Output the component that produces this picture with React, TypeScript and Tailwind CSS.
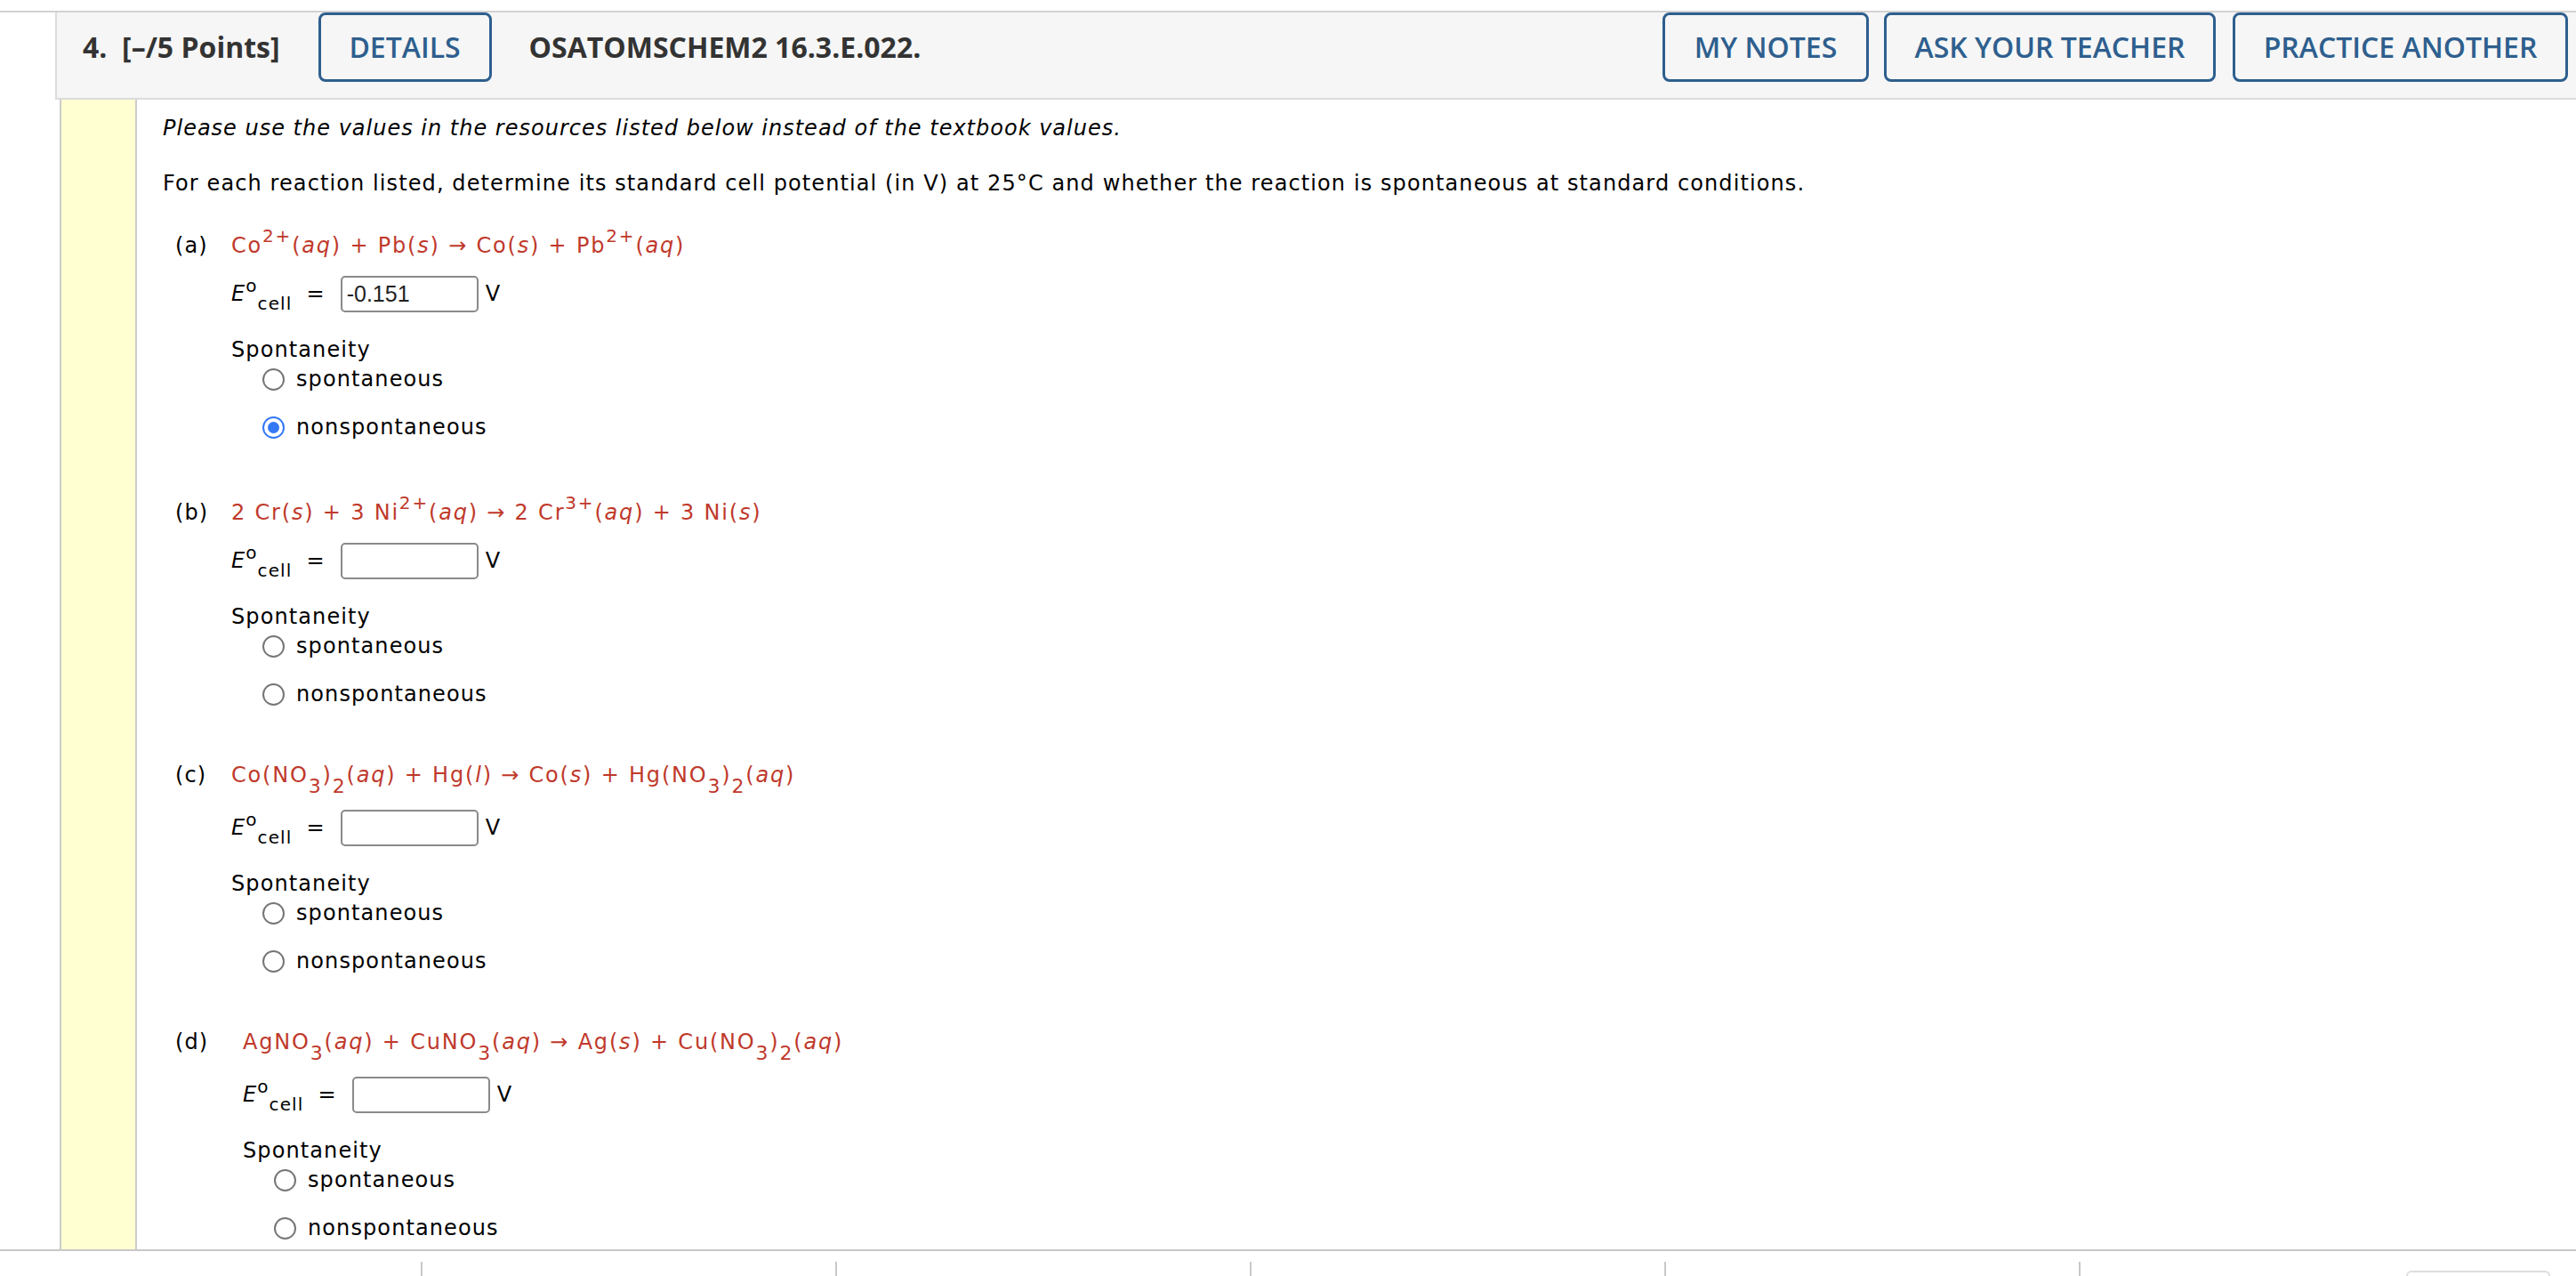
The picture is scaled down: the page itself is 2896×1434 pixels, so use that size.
import React from "react";

const RED = "text-[#c0392b]";

function Radio({ checked }: { checked?: boolean }) {
  if (checked) {
    return (
      <span className="flex h-[25px] w-[25px] shrink-0 items-center justify-center rounded-full border-[2.5px] border-[#3478f6] bg-white">
        <span className="h-[13px] w-[13px] rounded-full bg-[#3478f6]" />
      </span>
    );
  }
  return <span className="block h-[25px] w-[25px] shrink-0 rounded-full border-2 border-[#767676] bg-white" />;
}

function Sup({ children }: { children: React.ReactNode }) {
  return <sup className="top-[-12px] text-[20px]">{children}</sup>;
}
function Sub({ children }: { children: React.ReactNode }) {
  return <sub className="bottom-[-12px] text-[22px]">{children}</sub>;
}
function I({ children }: { children: React.ReactNode }) {
  return <i className="italic">{children}</i>;
}

function Ecell({ value }: { value?: string }) {
  return (
    <div className="flex h-[41px] items-center">
      <span className="whitespace-nowrap leading-[41px]">
        <span className="italic">E</span>
        <sup className="top-[-10px] text-[20px]">o</sup>
        <sub className="bottom-[-10px] text-[20px]">cell</sub>
      </span>
      <span className="ml-[16px] leading-[41px]">=</span>
      <div className="ml-[17px] flex h-[41px] w-[155px] items-center rounded-[5px] border-2 border-[#8a8a8a] bg-white px-[5px] font-['Liberation_Sans',Arial,sans-serif] text-[25px] tracking-normal text-[#222]">
        {value ?? ""}
      </div>
      <span className="ml-[8px] leading-[41px]">V</span>
    </div>
  );
}

function Part({
  label,
  labelW,
  sub,
  checked,
  value,
  children,
}: {
  label: string;
  labelW: string;
  sub?: boolean;
  checked?: boolean;
  value?: string;
  children: React.ReactNode;
}) {
  return (
    <div className="ml-[14px] flex">
      <div className={`${labelW} h-[40px] shrink-0 ${sub ? "leading-[30px]" : "leading-[40px]"}`}>{label}</div>
      <div className="flex flex-col">
        <div
          className={`h-[40px] whitespace-nowrap tracking-[1.8px] ${RED} ${sub ? "leading-[30px]" : "leading-[40px]"}`}
        >
          {children}
        </div>
        <div className="mt-[14px]">
          <Ecell value={value} />
        </div>
        <div className="mt-[29px] h-[26px] leading-[26px]">Spontaneity</div>
        <div className="flex h-[40px] items-center pl-[35px]">
          <Radio />
          <span className="ml-[13px] leading-[40px]">spontaneous</span>
        </div>
        <div className="mt-[14px] flex h-[40px] items-center pl-[35px]">
          <Radio checked={checked} />
          <span className="ml-[13px] leading-[40px]">nonspontaneous</span>
        </div>
      </div>
    </div>
  );
}

function HeaderButton({ w, children }: { w: string; children: React.ReactNode }) {
  return (
    <div
      className={`${w} flex h-[78px] shrink-0 items-center justify-center rounded-[8px] border-[3px] border-[#2e5f8e] font-semibold text-[#2e5f8e]`}
    >
      {children}
    </div>
  );
}

export default function App() {
  return (
    <div className="relative min-h-[1434px] w-[2896px] overflow-hidden bg-white">
      <div className="h-[12px]" />
      <div className="h-[2px] w-full bg-[#d2d2d2]" />
      {/* header */}
      <div className="ml-[62px] flex h-[98px] items-start border-b-2 border-l-2 border-[#dcdcdc] bg-[#f6f6f6] pl-[29px] pr-[9px] font-['Open_Sans',sans-serif] text-[32px]">
        <div className="flex h-[78px] items-center whitespace-nowrap font-bold text-[#333333]">4.&nbsp; [–/5 Points]</div>
        <div className="ml-[43px]">
          <HeaderButton w="w-[195px]">DETAILS</HeaderButton>
        </div>
        <div className="ml-[42px] flex h-[78px] items-center whitespace-nowrap font-bold text-[#333333]">
          OSATOMSCHEM2 16.3.E.022.
        </div>
        <div className="ml-auto flex items-start">
          <HeaderButton w="w-[232px]">MY NOTES</HeaderButton>
          <div className="ml-[17px]">
            <HeaderButton w="w-[373px]">ASK YOUR TEACHER</HeaderButton>
          </div>
          <div className="ml-[19px]">
            <HeaderButton w="w-[377px]">PRACTICE ANOTHER</HeaderButton>
          </div>
        </div>
      </div>

      {/* body */}
      <div className="flex font-['DejaVu_Sans',Verdana,sans-serif] text-[24px] tracking-[1.1px] text-black">
        <div className="ml-[67px] w-[87px] shrink-0 self-stretch border-l-2 border-r-2 border-[#cccccc] bg-[#ffffd2]" />
        <div className="flex flex-col pb-[4px] pl-[29px] pt-[12px]">
          <div className="h-[40px] whitespace-nowrap italic leading-[40px] tracking-[1px]">
            Please use the values in the resources listed below instead of the textbook values.
          </div>
          <div className="mt-[22px] h-[40px] whitespace-nowrap leading-[40px]">
            For each reaction listed, determine its standard cell potential (in V) at 25°C and whether the reaction is
            spontaneous at standard conditions.
          </div>
          <div className="mt-[30px]">
            <Part label="(a)" labelW="w-[63px]" checked value="-0.151">
              Co<Sup>2+</Sup>(<I>aq</I>) + Pb(<I>s</I>) → Co(<I>s</I>) + Pb<Sup>2+</Sup>(<I>aq</I>)
            </Part>
          </div>
          <div className="mt-[56px]">
            <Part label="(b)" labelW="w-[63px]">
              2 Cr(<I>s</I>) + 3 Ni<Sup>2+</Sup>(<I>aq</I>) → 2 Cr<Sup>3+</Sup>(<I>aq</I>) + 3 Ni(<I>s</I>)
            </Part>
          </div>
          <div className="mt-[56px]">
            <Part label="(c)" labelW="w-[63px]" sub>
              Co(NO<Sub>3</Sub>)<Sub>2</Sub>(<I>aq</I>) + Hg(<I>l</I>) → Co(<I>s</I>) + Hg(NO<Sub>3</Sub>)<Sub>2</Sub>(
              <I>aq</I>)
            </Part>
          </div>
          <div className="mt-[56px]">
            <Part label="(d)" labelW="w-[76px]" sub>
              AgNO<Sub>3</Sub>(<I>aq</I>) + CuNO<Sub>3</Sub>(<I>aq</I>) → Ag(<I>s</I>) + Cu(NO<Sub>3</Sub>)<Sub>2</Sub>(
              <I>aq</I>)
            </Part>
          </div>
        </div>
      </div>

      <div className="h-[2px] w-full bg-[#c8c8c8]" />
      {/* footer strip */}
      <div className="flex h-[28px] pl-[7px]">
        <div className="w-[466px] shrink-0" />
        <div className="mt-[12px] w-[466px] shrink-0 border-l-2 border-[#c8c8c8]" />
        <div className="mt-[12px] w-[466px] shrink-0 border-l-2 border-[#c8c8c8]" />
        <div className="mt-[12px] w-[466px] shrink-0 border-l-2 border-[#c8c8c8]" />
        <div className="mt-[12px] w-[466px] shrink-0 border-l-2 border-[#c8c8c8]" />
        <div className="mt-[12px] flex-1 border-l-2 border-[#c8c8c8]" />
        <div className="mr-[29px] mt-[22px] w-[162px] shrink-0 rounded-t-[10px] border-l-2 border-r-2 border-t-2 border-[#dddddd]" />
      </div>
    </div>
  );
}
